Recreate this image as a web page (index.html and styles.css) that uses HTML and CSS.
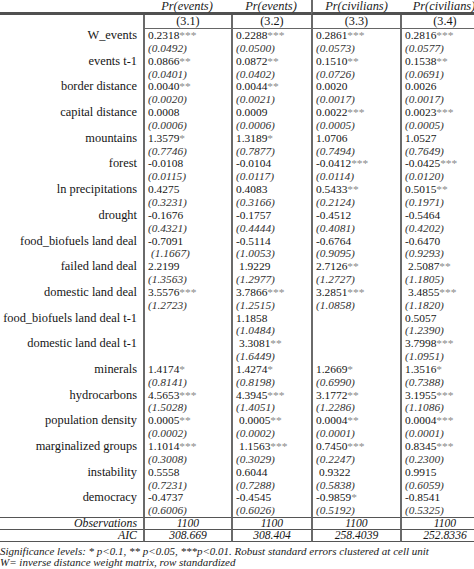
FILE: index.html
```html
<!DOCTYPE html>
<html>
<head>
<meta charset="utf-8">
<link rel="stylesheet" href="styles.css">
</head>
<body>
<div class="page">
<table class="reg">
<colgroup><col class="c0"><col class="c1"><col class="c2"><col class="c3"><col class="c4"></colgroup>
<tr class="h1"><td class="lab"></td><td class="hd">Pr(events)</td><td class="hd">Pr(events)</td><td class="hd vl">Pr(civilians)</td><td class="hd">Pr(civilians)</td></tr>
<tr class="h2"><td class="lab"></td><td class="d cn">(3.1)</td><td class="d cn">(3.2)</td><td class="d cn">(3.3)</td><td class="d cn">(3.4)</td></tr>

<tr><td class="lab">W_events</td><td class="d">0.2318<span class="st">***</span></td><td class="d">0.2288<span class="st">***</span></td><td class="d">0.2861<span class="st">***</span></td><td class="d">0.2816<span class="st">***</span></td></tr>
<tr class="se"><td class="lab"></td><td class="d">(0.0492)</td><td class="d">(0.0500)</td><td class="d">(0.0573)</td><td class="d">(0.0577)</td></tr>

<tr><td class="lab">events t-1</td><td class="d">0.0866<span class="st">**</span></td><td class="d">0.0872<span class="st">**</span></td><td class="d">0.1510<span class="st">**</span></td><td class="d">0.1538<span class="st">**</span></td></tr>
<tr class="se"><td class="lab"></td><td class="d">(0.0401)</td><td class="d">(0.0402)</td><td class="d">(0.0726)</td><td class="d">(0.0691)</td></tr>

<tr><td class="lab">border distance</td><td class="d">0.0040<span class="st">**</span></td><td class="d">0.0044<span class="st">**</span></td><td class="d">0.0020</td><td class="d">0.0026</td></tr>
<tr class="se"><td class="lab"></td><td class="d">(0.0020)</td><td class="d">(0.0021)</td><td class="d">(0.0017)</td><td class="d">(0.0017)</td></tr>

<tr><td class="lab">capital distance</td><td class="d">0.0008</td><td class="d">0.0009</td><td class="d">0.0022<span class="st">***</span></td><td class="d">0.0023<span class="st">***</span></td></tr>
<tr class="se"><td class="lab"></td><td class="d">(0.0006)</td><td class="d">(0.0006)</td><td class="d">(0.0005)</td><td class="d">(0.0005)</td></tr>

<tr><td class="lab">mountains</td><td class="d">1.3579<span class="st">*</span></td><td class="d">1.3189<span class="st">*</span></td><td class="d">1.0706</td><td class="d">1.0527</td></tr>
<tr class="se"><td class="lab"></td><td class="d">(0.7746)</td><td class="d">(0.7877)</td><td class="d">(0.7494)</td><td class="d">(0.7649)</td></tr>

<tr><td class="lab">forest</td><td class="d">-0.0108</td><td class="d">-0.0104</td><td class="d">-0.0412<span class="st">***</span></td><td class="d">-0.0425<span class="st">***</span></td></tr>
<tr class="se"><td class="lab"></td><td class="d">(0.0115)</td><td class="d">(0.0117)</td><td class="d">(0.0114)</td><td class="d">(0.0120)</td></tr>

<tr><td class="lab">ln precipitations</td><td class="d">0.4275</td><td class="d">0.4083</td><td class="d">0.5433<span class="st">**</span></td><td class="d">0.5015<span class="st">**</span></td></tr>
<tr class="se"><td class="lab"></td><td class="d">(0.3231)</td><td class="d">(0.3166)</td><td class="d">(0.2124)</td><td class="d">(0.1971)</td></tr>

<tr><td class="lab">drought</td><td class="d">-0.1676</td><td class="d">-0.1757</td><td class="d">-0.4512</td><td class="d">-0.5464</td></tr>
<tr class="se"><td class="lab"></td><td class="d">(0.4321)</td><td class="d">(0.4444)</td><td class="d">(0.4081)</td><td class="d">(0.4202)</td></tr>

<tr><td class="lab">food_biofuels land deal</td><td class="d">-0.7091</td><td class="d">-0.5114</td><td class="d">-0.6764</td><td class="d">-0.6470</td></tr>
<tr class="se"><td class="lab"></td><td class="d"><span class="ind">(1.1667)</span></td><td class="d">(1.0053)</td><td class="d">(0.9095)</td><td class="d">(0.9293)</td></tr>

<tr><td class="lab">failed land deal</td><td class="d">2.2199</td><td class="d"><span class="ind">1.9229</span></td><td class="d">2.7126<span class="st">**</span></td><td class="d"><span class="ind">2.5087</span><span class="st">**</span></td></tr>
<tr class="se"><td class="lab"></td><td class="d">(1.3563)</td><td class="d">(1.2977)</td><td class="d">(1.2727)</td><td class="d">(1.1805)</td></tr>

<tr><td class="lab">domestic land deal</td><td class="d">3.5576<span class="st">***</span></td><td class="d">3.7866<span class="st">***</span></td><td class="d">3.2851<span class="st">***</span></td><td class="d"><span class="ind">3.4855</span><span class="st">***</span></td></tr>
<tr class="se"><td class="lab"></td><td class="d">(1.2723)</td><td class="d">(1.2515)</td><td class="d">(1.0858)</td><td class="d">(1.1820)</td></tr>

<tr><td class="lab">food_biofuels land deal t-1</td><td class="d"></td><td class="d">1.1858</td><td class="d"></td><td class="d">0.5057</td></tr>
<tr class="se"><td class="lab"></td><td class="d"></td><td class="d">(1.0484)</td><td class="d"></td><td class="d">(1.2390)</td></tr>

<tr><td class="lab">domestic land deal t-1</td><td class="d"></td><td class="d"><span class="ind">3.3081</span><span class="st">**</span></td><td class="d"></td><td class="d">3.7998<span class="st">***</span></td></tr>
<tr class="se"><td class="lab"></td><td class="d"></td><td class="d">(1.6449)</td><td class="d"></td><td class="d">(1.0951)</td></tr>

<tr><td class="lab">minerals</td><td class="d">1.4174<span class="st">*</span></td><td class="d">1.4274<span class="st">*</span></td><td class="d">1.2669<span class="st">*</span></td><td class="d">1.3516<span class="st">*</span></td></tr>
<tr class="se"><td class="lab"></td><td class="d">(0.8141)</td><td class="d">(0.8198)</td><td class="d">(0.6990)</td><td class="d">(0.7388)</td></tr>

<tr><td class="lab">hydrocarbons</td><td class="d">4.5653<span class="st">***</span></td><td class="d">4.3945<span class="st">***</span></td><td class="d">3.1772<span class="st">**</span></td><td class="d">3.1955<span class="st">***</span></td></tr>
<tr class="se"><td class="lab"></td><td class="d">(1.5028)</td><td class="d">(1.4051)</td><td class="d">(1.2286)</td><td class="d">(1.1086)</td></tr>

<tr><td class="lab">population density</td><td class="d">0.0005<span class="st">**</span></td><td class="d"><span class="ind">0.0005</span><span class="st">**</span></td><td class="d">0.0004<span class="st">**</span></td><td class="d">0.0004<span class="st">***</span></td></tr>
<tr class="se"><td class="lab"></td><td class="d">(0.0002)</td><td class="d">(0.0002)</td><td class="d">(0.0001)</td><td class="d">(0.0001)</td></tr>

<tr><td class="lab">marginalized groups</td><td class="d">1.1014<span class="st">***</span></td><td class="d"><span class="ind">1.1563</span><span class="st">***</span></td><td class="d">0.7450<span class="st">***</span></td><td class="d">0.8345<span class="st">***</span></td></tr>
<tr class="se"><td class="lab"></td><td class="d">(0.3008)</td><td class="d">(0.3029)</td><td class="d">(0.2247)</td><td class="d">(0.2300)</td></tr>

<tr><td class="lab">instability</td><td class="d">0.5558</td><td class="d">0.6044</td><td class="d"><span class="ind">0.9322</span></td><td class="d">0.9915</td></tr>
<tr class="se"><td class="lab"></td><td class="d">(0.7231)</td><td class="d">(0.7288)</td><td class="d">(0.5838)</td><td class="d">(0.6059)</td></tr>

<tr><td class="lab">democracy</td><td class="d">-0.4737</td><td class="d">-0.4545</td><td class="d">-0.9859<span class="st">*</span></td><td class="d">-0.8541</td></tr>
<tr class="se last"><td class="lab"></td><td class="d">(0.6006)</td><td class="d">(0.6026)</td><td class="d">(0.5192)</td><td class="d">(0.5325)</td></tr>

<tr class="sum"><td class="lab">Observations</td><td class="d cn">1100</td><td class="d cn">1100</td><td class="d cn">1100</td><td class="d cn">1100</td></tr>
<tr class="sum"><td class="lab">AIC</td><td class="d cn">308.669</td><td class="d cn">308.404</td><td class="d cn">258.4039</td><td class="d cn">252.8336</td></tr>
</table>
<div class="notes">
<p>Significance levels: * p&lt;0.1, ** p&lt;0.05, ***p&lt;0.01. Robust standard errors clustered at cell unit</p>
<p>W= inverse distance weight matrix, row standardized</p>
</div>
</div>
</body>
</html>
```
FILE: styles.css
```css
html, body {
  margin: 0;
  padding: 0;
  background: #fff;
}
.page {
  width: 474px;
  height: 569px;
  overflow: hidden;
  font-family: "Liberation Serif", "Times New Roman", serif;
  color: #151515;
}
.reg {
  border-collapse: separate;
  border-spacing: 0;
  table-layout: fixed;
  width: 488px;
}
.c0 { width: 143px; }
.c1 { width: 88px; }
.c2 { width: 80px; }
.c3 { width: 89px; }
.c4 { width: 88px; }
.reg td {
  padding: 0;
  height: 12.85px;
  line-height: 12.85px;
  white-space: nowrap;
  vertical-align: middle;
  font-size: 11.4px;
}
.reg td.lab {
  text-align: right;
  padding-right: 6px;
  font-size: 12.4px;
}
.reg td.d {
  border-left: 2px solid #6a6a6a;
  padding-left: 3px;
}
.reg td.cn {
  text-align: center;
  padding-left: 0;
}
.st { color: #8a8a8a; }
.ind { padding-left: 3px; }
.se td.d {
  font-style: italic;
  color: #333;
}
.h1 td {
  height: 12px;
  line-height: 12px;
  border-bottom: 3px solid #505050;
}
.h1 td.hd {
  text-align: center;
  font-style: italic;
  font-size: 12.4px;
  color: #222;
}
.h1 td.vl {
  border-left: 2px solid #6a6a6a;
}
.h2 td {
  height: 13px;
  line-height: 13px;
}
.h2 td.d {
  font-size: 12.2px;
  border-bottom: 1px solid #666;
}
.last td { border-bottom: 1px solid #555; }
.sum td {
  height: 11px;
  line-height: 11px;
  font-style: italic;
  font-size: 11.6px;
  border-bottom: 1px solid #555;
}
.reg .sum td.lab { font-size: 11.8px; }
.notes {
  padding-top: 3.5px;
  font-style: italic;
  font-size: 11px;
  line-height: 11px;
  color: #1a1a1a;
}
.notes p {
  margin: 0;
  white-space: nowrap;
}
```
